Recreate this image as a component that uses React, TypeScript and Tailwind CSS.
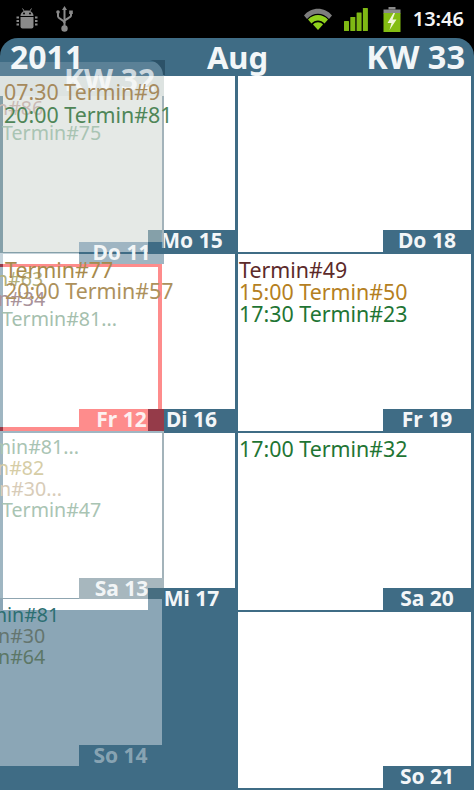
type Line = { t: string; c: string; ml?: string };

const teal = "bg-[#3f6c85]";

function AndroidIcon() {
  return (
    <svg width="22" height="24" viewBox="0 0 22 24" fill="#8a8a8a">
      <path d="M6.5 1.5 8.5 4.5M15.5 1.5 13.5 4.5" stroke="#8a8a8a" strokeWidth="1" />
      <path d="M4.5 9C4.500 5.500 7.500 3.500 11 3.500S17.500 5.500 17.500 9Z" />
      <circle cx="8" cy="6.500" r="1" fill="#000" />
      <circle cx="14" cy="6.500" r="1" fill="#000" />
      <path d="M4.500 10h13v9.500a2 2 0 0 1-2 2h-9a2 2 0 0 1-2-2Z" />
      <path d="M0.500 9.500h2.500v2h-2.500zM0.500 13h2.500v2h-2.500zM0.500 16.500h2.500v2h-2.500zM19 9.500h2.500v2h-2.500zM19 13h2.500v2h-2.500zM19 16.500h2.500v2h-2.500z" />
    </svg>
  );
}

function UsbIcon() {
  return (
    <svg width="17" height="26" viewBox="0 0 17 26" fill="none" stroke="#8a8a8a" strokeWidth="2">
      <path d="M8.500 3V20" />
      <path d="M2 7v3.500c0 2.500 6.500 3.500 6.500 6.500" />
      <path d="M15 6.500v3c0 2.500-6.500 3.500-6.500 6" />
      <path d="M8.500 0 6 4h5Z" fill="#8a8a8a" stroke="none" />
      <circle cx="2" cy="6" r="1.800" fill="#8a8a8a" stroke="none" />
      <rect x="13.200" y="4.500" width="3.600" height="3.500" fill="#8a8a8a" stroke="none" />
      <circle cx="8.500" cy="22.500" r="3.200" fill="#8a8a8a" stroke="none" />
    </svg>
  );
}

function WifiIcon() {
  return (
    <svg width="28" height="23" viewBox="0 0 28 23">
      <path d="M0 7.500C7 -1.500 21 -1.500 28 7.500L25 11C19 4 9 4 3 11Z" fill="#7d7d7d" />
      <path d="M4 11.500C9.500 5.500 18.500 5.500 24 11.500L20.500 15.500C17 11.500 11 11.500 7.500 15.500Z" fill="#8fd01c" />
      <path d="M9 16.500C11.500 13.500 16.500 13.500 19 16.500L14 22Z" fill="#8fd01c" />
    </svg>
  );
}

function SignalIcon() {
  return (
    <svg width="24" height="23" viewBox="0 0 24 23" fill="#7fb814">
      <rect x="0" y="13" width="5" height="10" rx="0.500" />
      <rect x="6.300" y="9" width="5" height="14" rx="0.500" />
      <rect x="12.600" y="4.500" width="5" height="18.500" rx="0.500" />
      <rect x="18.900" y="0" width="5" height="23" rx="0.500" />
    </svg>
  );
}

function BatteryIcon() {
  return (
    <svg width="18" height="25" viewBox="0 0 18 25">
      <path d="M5.500 0h7v2.500h-7z" fill="#8a8a8a" />
      <rect x="0.500" y="2.500" width="17" height="4" fill="#8a8a8a" />
      <rect x="0.500" y="6" width="17" height="19" fill="#84bd13" />
      <path d="M10.500 6 4.500 16h4l-2 7 7-10.500H9.500l2.500-6.500Z" fill="#f2f7da" />
    </svg>
  );
}

function StatusBar() {
  return (
    <div className="flex h-[38px] items-center bg-black">
      <div className="ml-[16px]"><AndroidIcon /></div>
      <div className="ml-[18px]"><UsbIcon /></div>
      <div className="ml-auto"><WifiIcon /></div>
      <div className="ml-[12px]"><SignalIcon /></div>
      <div className="ml-[15px]"><BatteryIcon /></div>
      <div className="ml-[12px] mr-[10px] text-[20px] font-semibold leading-none text-[#f4f4f4]">13:46</div>
    </div>
  );
}

function Header() {
  return (
    <div className="grid h-[38px] grid-cols-[1fr_auto_1fr] items-center pl-[10px] pr-[9px] text-[31px] font-bold leading-none text-[#f2f6f8]">
      <div className="text-[32px]">2011</div>
      <div>Aug</div>
      <div className="text-right text-[32.5px]">KW 33</div>
    </div>
  );
}

function DayCell({ label, lines, w = "w-[88px]" }: { label: string; lines?: Line[]; w?: string }) {
  return (
    <div className="flex flex-col bg-white">
      <div className="flex-1 pl-px pt-[5px] text-[21.4px] leading-[22px]">
        {lines?.map((l) => (
          <div key={l.t} className={`whitespace-nowrap ${l.c}`}>{l.t}</div>
        ))}
      </div>
      <div className={`ml-auto flex h-[22px] ${w} items-center justify-center ${teal} text-[21px] font-bold text-[#f3f6f8]`}>
        {label}
      </div>
    </div>
  );
}

function Grid() {
  return (
    <div className="grid grid-cols-[232px_233px] grid-rows-[176px_177px_177px_176px] gap-x-[3px] gap-y-[2px] pl-[3px]">
      <DayCell label="Mo 15" w="w-[87px]" />
      <DayCell label="Do 18" />
      <DayCell label="Di 16" w="w-[87px]" />
      <DayCell
        label="Fr 19"
        lines={[
          { t: "Termin#49", c: "text-[#5c2a2a]" },
          { t: "15:00 Termin#50", c: "text-[#b57f22]" },
          { t: "17:30 Termin#23", c: "text-[#1f7534]" },
        ]}
      />
      <DayCell label="Mi 17" w="w-[87px]" />
      <DayCell label="Sa 20" lines={[{ t: "17:00 Termin#32", c: "text-[#1f7534]" }]} />
      <div className={teal} />
      <DayCell label="So 21" />
    </div>
  );
}

function SheetLabel({ text, cls }: { text: string; cls: string }) {
  return (
    <div className={`flex flex-1 items-center justify-center text-[21px] font-bold ${cls}`}>{text}</div>
  );
}

// previous week sheet sliding out over the left column
function PrevWeek() {
  return (
    <div className="absolute left-0 top-[62px] w-[164px]">
      <div className="h-[14px] bg-white/15" />
      <div className="h-[20px] bg-[#dde3e1]" />
      {/* Do 11 */}
      <div className="h-[146px] border-r-2 border-[#a3b3ba] bg-[#ccd4ce]/50 bg-clip-padding" />
      <div className="flex h-[22px]">
        <div className="w-[79px]">
          <div className="h-[11px] bg-[#ccd4ce]/50" />
          <div className="h-[11px] bg-white/70" />
        </div>
        <SheetLabel text="Do 11" cls="bg-[#3f6c85]/50 text-[#f2f5f6]" />
      </div>
      {/* Fr 12 */}
      <div className="mr-[2px] h-[145px] border-r-4 border-t-[3px] border-[#fd0000]/45 bg-white/50 bg-clip-padding" />
      <div className="flex h-[22px]">
        <div className="h-[22px] w-[79px] border-b-4 border-[#fd0000]/45 bg-white/50 bg-clip-padding" />
        <SheetLabel text="Fr 12" cls="bg-[#fd0000]/45 text-[#fdf0f0]" />
      </div>
      {/* Sa 13 */}
      <div className="h-[147px] border-r-2 border-[#a3b3ba] bg-white/50 bg-clip-padding" />
      <div className="flex h-[21px]">
        <div className="w-[79px] border-b border-[#8fa5b0] bg-white/50" />
        <SheetLabel text="Sa 13" cls="bg-[#4f6f7d]/50 text-[#f2f5f6]" />
      </div>
      {/* So 14 */}
      <div className="mr-[2px] h-[146px] bg-white/40" />
      <div className="mr-[2px] flex h-[21px]">
        <div className="w-[79px] bg-white/40" />
        <SheetLabel text="So 14" cls="text-white/40" />
      </div>
    </div>
  );
}

function Lines({ top, lines, cls }: { top: string; lines: Line[]; cls: string }) {
  return (
    <div className={`absolute left-0 ${top} ${cls}`}>
      {lines.map((l) => (
        <div key={l.t} className={`whitespace-nowrap ${l.c} ${l.ml ?? ""}`}>{l.t}</div>
      ))}
    </div>
  );
}

export default function App() {
  return (
    <div className="relative h-[790px] w-[474px] overflow-hidden bg-black font-['Noto_Sans',sans-serif]">
      <StatusBar />
      <div className={`h-[752px] rounded-t-[18px] ${teal}`}>
        <Header />
        <Grid />
      </div>

      <PrevWeek />

      {/* small corner of the sliding sheet */}
      <svg className="absolute left-[148px] top-[59px]" width="18" height="18" viewBox="0 0 18 18">
        <path d="M2 1H17V16H15C15 9 10 3 2 1Z" fill="#2c5268" />
      </svg>
      <div className="absolute left-[64px] top-[63px] text-[30px] font-bold leading-[34px] text-white/70">KW 32</div>

      {/* week further back, smaller and fainter */}
      <Lines
        top="top-[95px]"
        cls="text-[19.6px] leading-[25px]"
        lines={[
          { t: "Termin#86", c: "text-[#c9b9b4]", ml: "-ml-[56px]" },
          { t: "Termin#75", c: "text-[#a9c4b3]", ml: "ml-[2px]" },
        ]}
      />
      <Lines
        top="top-[80px]"
        cls="text-[21.4px] leading-[23px]"
        lines={[
          { t: "07:30 Termin#9", c: "text-[#a68a5c]", ml: "ml-[4px]" },
          { t: "20:00 Termin#81", c: "text-[#4f8658]", ml: "ml-[4px]" },
        ]}
      />
      <Lines
        top="top-[269px]"
        cls="text-[19.6px] leading-[20px]"
        lines={[
          { t: "Termin#63", c: "text-[#b3b07a]", ml: "-ml-[56px]" },
          { t: "Termin#34", c: "text-[#a9929a]", ml: "-ml-[54px]" },
          { t: "Termin#81...", c: "text-[#a5bfae]", ml: "ml-[2px]" },
        ]}
      />
      <Lines
        top="top-[259px]"
        cls="text-[21.4px] leading-[21px]"
        lines={[
          { t: "Termin#77", c: "text-[#a78a4c]", ml: "ml-[5px]" },
          { t: "20:00 Termin#57", c: "text-[#ad915c]", ml: "ml-[5px]" },
        ]}
      />
      <Lines
        top="top-[436px]"
        cls="text-[19.6px] leading-[21px]"
        lines={[
          { t: "Termin#81...", c: "text-[#a9c4b3]", ml: "-ml-[36px]" },
          { t: "Termin#82", c: "text-[#d6cda6]", ml: "-ml-[55px]" },
          { t: "Termin#30...", c: "text-[#d8ccb8]", ml: "-ml-[53px]" },
          { t: "Termin#47", c: "text-[#a9c4b3]", ml: "ml-[2px]" },
        ]}
      />
      <Lines
        top="top-[604px]"
        cls="text-[19.6px] leading-[21px]"
        lines={[
          { t: "Termin#81", c: "text-[#2c6f72]", ml: "-ml-[40px]" },
          { t: "Termin#30", c: "text-[#64756f]", ml: "-ml-[54px]" },
          { t: "Termin#64", c: "text-[#5c7766]", ml: "-ml-[54px]" },
        ]}
      />
    </div>
  );
}
